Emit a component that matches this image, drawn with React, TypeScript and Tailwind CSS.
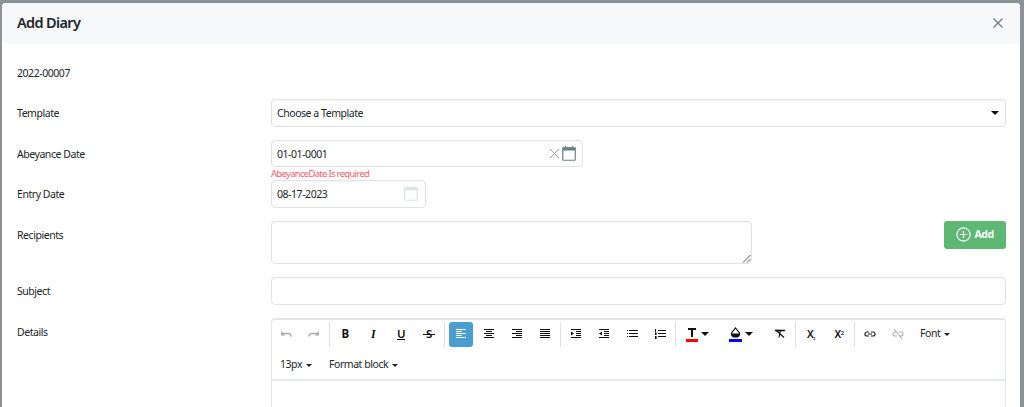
import type { ReactNode } from "react"

const Ico = ({ children, size = 14 }: { children: ReactNode; size?: number }) => (
    <svg width={size} height={size} viewBox="0 0 14 14" fill="none">{children}</svg>
)

const lines = (rows: [number, number, number][], color = "#111") =>
    rows.map(([x, y, w], i) => <rect key={i} x={x} y={y} width={w} height="1" fill={color} />)

function ToolBtn({ children, active }: { children: ReactNode; active?: boolean }) {
    return (
        <button className={active
            ? "w-[24px] h-[25px] ml-[3px] mr-[2px] flex items-center justify-center rounded-[3px] bg-[#4a9fd0]"
            : "w-[28px] h-[25px] flex items-center justify-center"}>
            {children}
        </button>
    )
}

const Sep = () => <div className="w-px h-[25px] bg-[#dde1e4] mx-px" />

const Caret = () => <span className="w-0 h-0 border-x-[4px] border-x-transparent border-t-[4px] border-t-[#111]" />

function SmallCaret() {
    return <span className="ml-[4px] inline-block align-middle w-0 h-0 border-x-[3px] border-x-transparent border-t-[3px] border-t-[#222]" />
}

function Row({ label, children, className }: { label: string; children?: ReactNode; className?: string }) {
    return (
        <div className={`flex ${className ?? ""}`}>
            <div className="w-[254px] shrink-0 pt-[6px] leading-[16px]">{label}</div>
            {children}
        </div>
    )
}

const inputCls = "h-[27.5px] border border-[#dfe3e6] rounded-[4px] bg-white flex items-center px-[5px] shadow-[inset_0_1px_2px_rgba(0,0,0,0.04)]"

function CalendarIcon({ color }: { color: string }) {
    return (
        <svg width="14" height="15" viewBox="0 0 14 15" fill="none">
            <rect x="0.75" y="1.75" width="12.5" height="12.5" rx="0.8" stroke={color} strokeWidth="1.2" />
            <rect x="0.5" y="1.5" width="13" height="3" fill={color} />
            <rect x="3" y="0" width="1.2" height="2" fill={color} />
            <rect x="9.8" y="0" width="1.2" height="2" fill={color} />
        </svg>
    )
}

export default function App() {
    return (
        <div className="h-[407px] overflow-hidden bg-[#8d9296] pl-[2px] pt-[3px] pr-[4px] text-[#212529] text-[10.5px] tracking-[-0.45px] font-['Noto_Sans',sans-serif]">
            <div className="h-[500px] bg-white rounded-t-[4px]">
                <div className="h-[40px] bg-[#f6f8fa] rounded-t-[4px] flex items-center justify-between pl-[15px] pr-[16px]">
                    <h5 className="text-[14.5px] tracking-[-0.65px] font-semibold text-[#212529]">Add Diary</h5>
                    <svg width="12" height="12" viewBox="0 0 12 12" stroke="#6c7a80" strokeWidth="1.3">
                        <path d="M1.5 1.5l9 9M10.5 1.5l-9 9" />
                    </svg>
                </div>

                <div className="pl-[15px] pr-[14px]">
                    <div className="pt-[22px] leading-[16px] h-[56px]">2022-00007</div>

                    <Row label="Template">
                        <div className={`${inputCls} flex-1 justify-between pr-[5px]`}>
                            <span className="pt-[3px]">Choose a Template</span>
                            <span className="w-0 h-0 mr-[1px] border-x-[4px] border-x-transparent border-t-[4px] border-t-[#111]" />
                        </div>
                    </Row>

                    <Row label="Abeyance Date" className="mt-[13px]">
                        <div className="w-[312px]">
                            <div className={`${inputCls} justify-between pr-[6px]`}>
                                <span className="pt-[3px]">01-01-0001</span>
                                <span className="flex items-center gap-[2px]">
                                    <svg width="11" height="11" viewBox="0 0 11 11" stroke="#98a1a6" strokeWidth="1">
                                        <path d="M1 1l9 9M10 1l-9 9" />
                                    </svg>
                                    <CalendarIcon color="#6c7f87" />
                                </span>
                            </div>
                            <div className="text-[#f5606f] text-[9.5px] tracking-[-0.7px] leading-[13px]">AbeyanceDate Is required</div>
                        </div>
                    </Row>

                    <Row label="Entry Date">
                        <div className={`${inputCls} w-[155px] justify-between pr-[7px]`}>
                            <span className="pt-[2px]">08-17-2023</span>
                            <CalendarIcon color="#dfe3e6" />
                        </div>
                    </Row>

                    <Row label="Recipients" className="mt-[13px]">
                        <div className="flex-1 flex justify-between">
                            <div className="relative w-[481px] h-[43.5px] border border-[#dfe3e6] rounded-[4px] shadow-[inset_0_1px_2px_rgba(0,0,0,0.04)]">
                                <svg className="absolute right-0 bottom-0" width="9" height="9" viewBox="0 0 9 9" stroke="#555" strokeWidth="1">
                                    <path d="M8.5 1L1 8.5M8.5 5L5 8.5" />
                                </svg>
                            </div>
                            <button className="w-[62px] h-[28px] rounded-[3px] bg-[#5cb873] text-white font-bold text-[10.5px] flex items-center justify-center gap-[3px]">
                                <svg width="15" height="15" viewBox="0 0 15 15" fill="none" stroke="#fff" strokeWidth="1.2">
                                    <circle cx="7.5" cy="7.5" r="6.6" />
                                    <path d="M7.5 3.8v7.4M3.8 7.5h7.4" />
                                </svg>
                                Add
                            </button>
                        </div>
                    </Row>

                    <Row label="Subject" className="mt-[13px]">
                        <div className={`${inputCls} flex-1`} />
                    </Row>

                    <Row label="Details" className="mt-[13px]">
                        <div className="flex-1 h-[120px] border-x border-t-2 border-[#e4e7e9] rounded-t-[4px]">
                            <div className="h-[61px] border-b-2 border-[#e8ebed] pt-[2px]">
                                <div className="flex items-center h-[25px]">
                                    <ToolBtn>
                                        <Ico>
                                            <path d="M3 6.5h6c1.8 0 3 1 3 3" stroke="#a8aeb3" strokeWidth="1.6" />
                                            <path d="M2 4v4.5h4.5z" fill="#a8aeb3" />
                                        </Ico>
                                    </ToolBtn>
                                    <ToolBtn>
                                        <Ico>
                                            <path d="M11 6.5H5c-1.8 0-3 1-3 3" stroke="#a8aeb3" strokeWidth="1.6" />
                                            <path d="M12 4v4.5H7.5z" fill="#a8aeb3" />
                                        </Ico>
                                    </ToolBtn>
                                    <Sep />
                                    <ToolBtn>
                                        <span className="font-bold text-[11.5px] text-[#111] leading-none">B</span>
                                    </ToolBtn>
                                    <ToolBtn>
                                        <span className="font-['Liberation_Serif',serif] font-bold italic text-[12px] text-[#111] leading-none">I</span>
                                    </ToolBtn>
                                    <ToolBtn>
                                        <span className="font-semibold underline text-[11.5px] text-[#111] leading-none">U</span>
                                    </ToolBtn>
                                    <ToolBtn>
                                        <span className="relative font-semibold text-[11.5px] text-[#111] leading-none px-[2px]">
                                            S
                                            <span className="absolute left-[-1px] right-[-1px] top-[6px] h-px bg-[#111]" />
                                        </span>
                                    </ToolBtn>
                                    <Sep />
                                    <ToolBtn active>
                                        <Ico>{lines([[2, 2, 10], [2, 4, 6], [2, 6, 10], [2, 8, 6], [2, 10, 10]], "#fff")}</Ico>
                                    </ToolBtn>
                                    <ToolBtn>
                                        <Ico>{lines([[2, 2, 10], [4, 4, 6], [2, 6, 10], [4, 8, 6], [2, 10, 10]])}</Ico>
                                    </ToolBtn>
                                    <ToolBtn>
                                        <Ico>{lines([[2, 2, 10], [6, 4, 6], [2, 6, 10], [6, 8, 6], [2, 10, 10]])}</Ico>
                                    </ToolBtn>
                                    <ToolBtn>
                                        <Ico>{lines([[2, 2, 10], [2, 4, 10], [2, 6, 10], [2, 8, 10], [2, 10, 10]])}</Ico>
                                    </ToolBtn>
                                    <Sep />
                                    <ToolBtn>
                                        <Ico>
                                            {lines([[2, 2, 10], [7, 4, 5], [7, 6, 5], [7, 8, 5], [2, 10, 10]])}
                                            <path d="M2 4.5L5 6.5L2 8.5z" fill="#111" />
                                        </Ico>
                                    </ToolBtn>
                                    <ToolBtn>
                                        <Ico>
                                            {lines([[2, 2, 10], [7, 4, 5], [7, 6, 5], [7, 8, 5], [2, 10, 10]])}
                                            <path d="M5 4.5L2 6.5L5 8.5z" fill="#111" />
                                        </Ico>
                                    </ToolBtn>
                                    <ToolBtn>
                                        <Ico>
                                            {lines([[4, 3, 9], [4, 6, 9], [4, 9, 9]])}
                                            {lines([[2, 3, 1], [2, 6, 1], [2, 9, 1]])}
                                        </Ico>
                                    </ToolBtn>
                                    <ToolBtn>
                                        <Ico>
                                            {lines([[5, 3, 8], [5, 6, 8], [5, 9, 8]])}
                                            <rect x="2" y="2" width="1" height="3" fill="#111" />
                                            <rect x="2" y="5.5" width="1.6" height="2.5" fill="#111" />
                                            <rect x="2" y="9" width="1.6" height="3" fill="#111" />
                                        </Ico>
                                    </ToolBtn>
                                    <Sep />
                                    <button className="w-[43px] h-[25px] flex items-center pl-[9px] gap-[3px]">
                                        <svg width="12" height="15" viewBox="0 0 12 15" fill="none">
                                            <path d="M2 1h8v2H7v7H5V3H2z" fill="#111" />
                                            <rect x="0" y="12" width="12" height="3" fill="#ff0000" />
                                        </svg>
                                        <Caret />
                                    </button>
                                    <button className="w-[44px] h-[25px] flex items-center pl-[9px] gap-[3px]">
                                        <svg width="13" height="15" viewBox="0 0 13 15" fill="none">
                                            <path d="M6.5 1L10.5 6C11 8.5 9 10 6.5 10S2 8.5 2.5 6z" stroke="#111" strokeWidth="1.2" />
                                            <path d="M2.5 6.5h8C11 8.5 9 10 6.5 10S2 8.5 2.5 6.5z" fill="#111" />
                                            <rect x="0" y="12" width="13" height="3" fill="#0000ff" />
                                        </svg>
                                        <Caret />
                                    </button>
                                    <div className="w-[2px]" />
                                    <ToolBtn>
                                        <Ico>
                                            <path d="M2 3.5h10" stroke="#111" strokeWidth="1.6" />
                                            <path d="M7.5 3l-1.5 7.5M3 3l8 7.5" stroke="#111" strokeWidth="1.2" />
                                        </Ico>
                                    </ToolBtn>
                                    <Sep />
                                    <ToolBtn>
                                        <span className="font-semibold text-[10.5px] text-[#111] leading-none">X<sub className="text-[6px]">₂</sub></span>
                                    </ToolBtn>
                                    <ToolBtn>
                                        <span className="font-semibold text-[10.5px] text-[#111] leading-none">X<sup className="text-[6px]">2</sup></span>
                                    </ToolBtn>
                                    <Sep />
                                    <ToolBtn>
                                        <Ico>
                                            <path d="M6 5H4a2 2 0 000 4h2M8 5h2a2 2 0 010 4H8M5 7h4" stroke="#222" strokeWidth="1.2" />
                                        </Ico>
                                    </ToolBtn>
                                    <ToolBtn>
                                        <Ico>
                                            <path d="M6 5H4a2 2 0 000 4h2M8 5h2a2 2 0 010 4H8M3 2l8 10" stroke="#aab0b5" strokeWidth="1.1" />
                                        </Ico>
                                    </ToolBtn>
                                    <span className="ml-[8px]">Font<SmallCaret /></span>
                                </div>
                                <div className="flex items-center h-[32px] pt-[5px] pl-[8px]">
                                    <span className="w-[49px]">13px<SmallCaret /></span>
                                    <span>Format block<SmallCaret /></span>
                                </div>
                            </div>
                        </div>
                    </Row>
                </div>
            </div>
        </div>
    )
}
